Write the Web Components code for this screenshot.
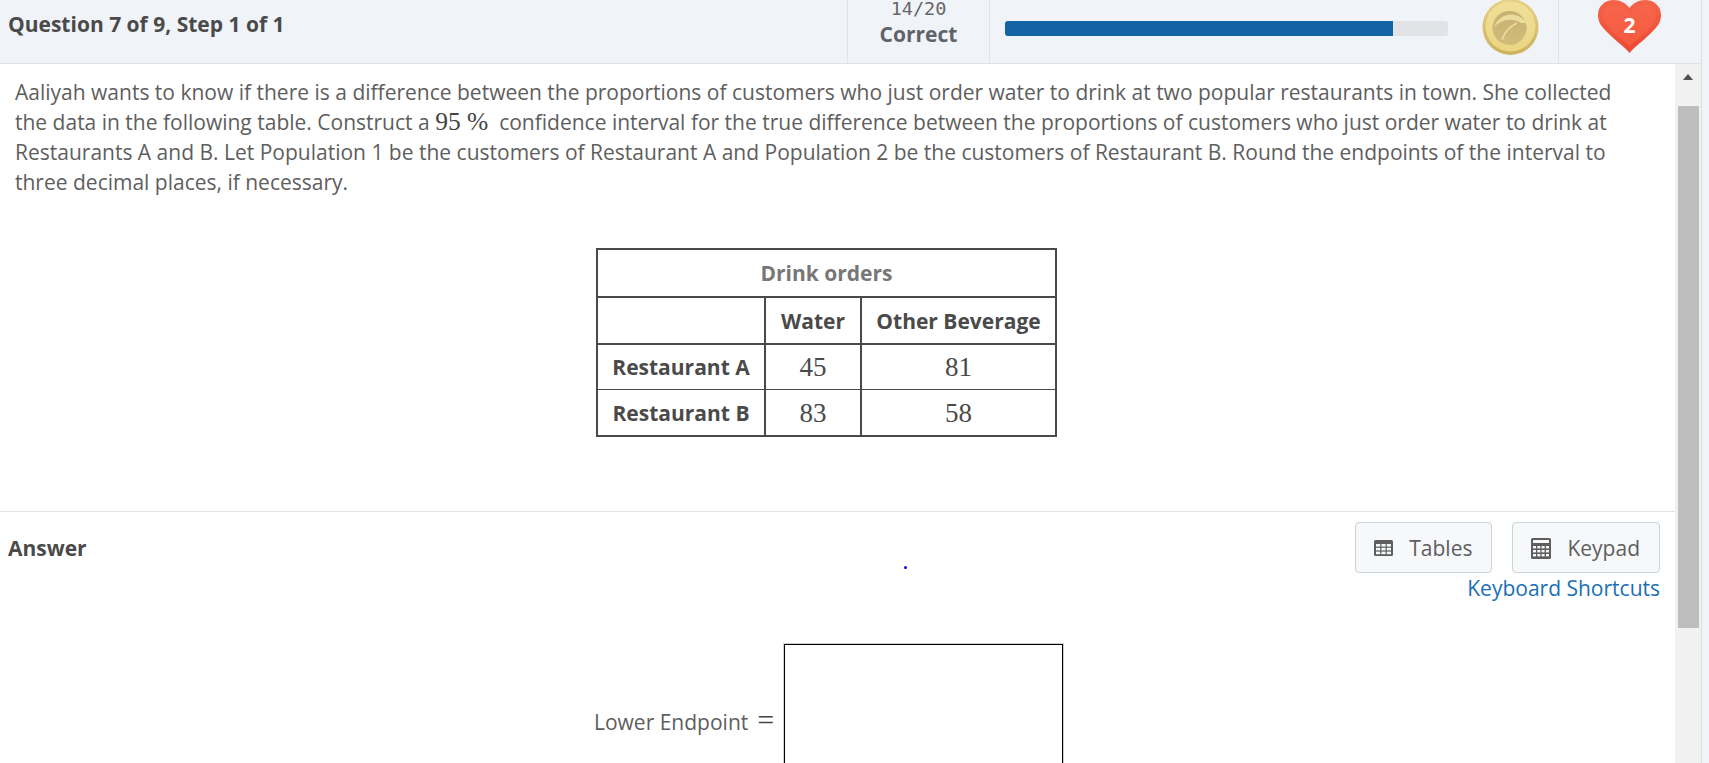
<!DOCTYPE html>
<html>
<head>
<meta charset="utf-8">
<style>
  html, body { margin: 0; height: 100%; overflow: hidden; }
  body { font-family: "Open Sans", sans-serif; color: #5e5e5e; background: #f0f3f7; }
</style>
</head>
<body>
<quiz-page>
  <quiz-header></quiz-header>
  <quiz-scroll>
    <quiz-question>
      Aaliyah wants to know if there is a difference between the proportions of customers who just order water to drink at two popular restaurants in town. She collected the data in the following table. Construct a <span style="font-family:'Liberation Serif',serif;font-size:25.5px;line-height:1;color:#444">95 %</span>&nbsp; confidence interval for the true difference between the proportions of customers who just order water to drink at Restaurants A and B. Let Population 1 be the customers of Restaurant A and Population 2 be the customers of Restaurant B. Round the endpoints of the interval to three decimal places, if necessary.
    </quiz-question>
    <drink-table></drink-table>
    <answer-bar></answer-bar>
    <answer-field label="Lower Endpoint"></answer-field>
  </quiz-scroll>
</quiz-page>

<script>
class QuizPage extends HTMLElement {
  constructor() {
    super();
    this.attachShadow({ mode: "open" });
    this.shadowRoot.innerHTML = `
      <style>
        :host { display: flex; flex-direction: column; width: 1701px; height: 763px; background: #f0f3f7; overflow: hidden; border-right: 1px solid #dcdfe3; }
      </style>
      <slot></slot>
    `;
  }
}

class QuizHeader extends HTMLElement {
  constructor() {
    super();
    this.attachShadow({ mode: "open" });
    this.shadowRoot.innerHTML = `
      <style>
        :host { display: flex; flex: none; height: 63px; background: #f0f3f7; border-bottom: 1px solid #dfe2e6; align-items: stretch; }
        .title { flex: none; width: 847px; padding: 11px 0 0 8px; font-size: 21px; font-weight: 700; color: #4a4a4a; line-height: 27px; box-sizing: border-box; }
        .score { flex: none; width: 141px; border-left: 1px solid #dfe2e6; border-right: 1px solid #dfe2e6; text-align: center; }
        .frac { font-family: "DejaVu Sans Mono", monospace; font-size: 18.5px; color: #666; line-height: 18px; }
        .ok { font-size: 21px; font-weight: 700; color: #5f6368; line-height: 26px; margin-top: 3px; }
        .bar-wrap { flex: none; width: 568px; padding-left: 15px; box-sizing: border-box; display: flex; }
        .bar { flex: none; width: 443px; height: 15px; margin-top: 21px; background: #e1e3e7; border-radius: 3px; overflow: hidden; }
        .fill { width: 388px; height: 100%; background: #1364a3; }
        .coin { flex: none; margin: 0 0 0 34px; width: 58px; height: 56px; }
        .lives { position: relative; flex: 1; border-left: 1px solid #dfe2e6; }
        .lives svg { position: absolute; left: 39px; top: 0; }
        .lives span { position: absolute; left: 39px; width: 63px; top: 11px; text-align: center; color: #fff; font-weight: 700; font-size: 21px; line-height: 28px; }
      </style>
      <div class="title">Question 7 of 9, Step 1 of 1</div>
      <div class="score"><div class="frac">14/20</div><div class="ok">Correct</div></div>
      <div class="bar-wrap">
        <div class="bar"><div class="fill"></div></div>
        <svg class="coin" viewBox="0 0 58 56">
          <defs>
            <linearGradient id="g" x1="0" y1="0" x2="0" y2="1"><stop offset="0" stop-color="#e6d184"/><stop offset="1" stop-color="#cdb25c"/></linearGradient>
            <linearGradient id="gi" x1="0" y1="0" x2="0" y2="1"><stop offset="0" stop-color="#f1df98"/><stop offset="1" stop-color="#ead684"/></linearGradient>
            <linearGradient id="gd" x1="0" y1="0" x2="0" y2="1"><stop offset="0" stop-color="#c6b176"/><stop offset="1" stop-color="#d2bc78"/></linearGradient>
          </defs>
          <circle cx="28.5" cy="27" r="28" fill="url(#g)"/>
          <circle cx="28.5" cy="26.5" r="25" fill="url(#gi)"/>
          <circle cx="27.5" cy="28" r="17" fill="url(#gd)"/>
          <path d="M12 27 C15 19 24 13 33 15 C38 16 42 19 45 23 L39 23 C33 19 25 19 19 22 C16 23 14 25 12 27 Z" fill="#ecdc9b"/>
          <path d="M20 40 C22 33 27 27 35 23" fill="none" stroke="#ecdc9b" stroke-width="1.6"/>
        </svg>
      </div>
      <div class="lives">
        <svg width="63" height="54" viewBox="0 0 63 54">
          <defs><linearGradient id="h" x1="0" y1="0" x2="0" y2="1"><stop offset="0" stop-color="#f5644a"/><stop offset="1" stop-color="#ef4632"/></linearGradient></defs>
          <path d="M31.5 53 C27 47 19 42 11 34 C4 27 0 23 0 15 C0 6 7 0 16 0 C22 0 28 3 31.5 8 C35 3 41 0 47 0 C56 0 63 6 63 15 C63 23 59 27 52 34 C44 42 36 47 31.5 53 Z" fill="url(#h)"/>
          <path d="M31.5 46 C25 40 8 30 5 17 C4 9 10 4 17 4 C23 4 28 8 31.5 13 C35 8 40 4 46 4 C53 4 59 9 58 17 C55 30 38 40 31.5 46 Z" fill="#f96a4c" opacity=".5"/>
        </svg>
        <span>2</span>
      </div>
    `;
  }
}

class QuizScroll extends HTMLElement {
  constructor() {
    super();
    this.attachShadow({ mode: "open" });
    this.shadowRoot.innerHTML = `
      <style>
        :host { display: flex; flex: 1; min-height: 0; }
        .content { width: 1675px; background: #fff; overflow: hidden; flex: none; }
        .rail { flex: 1; background: #f1f1f1; display: flex; flex-direction: column; align-items: center; }
        .arrow { flex: none; width: 0; height: 0; border-left: 5.5px solid transparent; border-right: 5.5px solid transparent; border-bottom: 6px solid #505050; margin-top: 10px; }
        .thumb { flex: none; width: 21px; height: 522px; background: #bebebe; margin-top: 26px; }
      </style>
      <div class="content"><slot></slot></div>
      <div class="rail"><div class="arrow"></div><div class="thumb"></div></div>
    `;
  }
}

class QuizQuestion extends HTMLElement {
  constructor() {
    super();
    this.attachShadow({ mode: "open" });
    this.shadowRoot.innerHTML = `
      <style>
        :host { display: block; padding: 13px 50px 0 15px; font-size: 21px; line-height: 30px; color: #5e5e5e; }
      </style>
      <slot></slot>
    `;
  }
}

class DrinkTable extends HTMLElement {
  constructor() {
    super();
    this.attachShadow({ mode: "open" });
    this.shadowRoot.innerHTML = `
      <style>
        :host { display: flex; justify-content: flex-start; padding: 51px 0 0 596px; }
        table { border-collapse: collapse; table-layout: fixed; border: 2px solid #4a4a4a; font-size: 21px; color: #4a4a4a; width: 461px; }
        td { border: 1px solid #4a4a4a; text-align: center; padding: 0; line-height: 24px; font-weight: 700; }
        .cap { color: #777; height: 46px; border-bottom-width: 2px; }
        .hd td { height: 45px; border-bottom-width: 2px; }
        .a td { height: 44px; }
        .b td { height: 45px; }
        .lab { border-right-width: 2px; }
        .wat { border-right-width: 2px; }
        .num { font-family: "Liberation Serif", serif; font-weight: 400; font-size: 27px; }
      </style>
      <table>
        <colgroup><col style="width:168px"><col style="width:96px"><col></colgroup>
        <tr><td class="cap" colspan="3">Drink orders</td></tr>
        <tr class="hd"><td class="lab"></td><td class="wat">Water</td><td>Other Beverage</td></tr>
        <tr class="a"><td class="lab">Restaurant A</td><td class="wat num">45</td><td class="num">81</td></tr>
        <tr class="b"><td class="lab">Restaurant B</td><td class="wat num">83</td><td class="num">58</td></tr>
      </table>
    `;
  }
}

class AnswerBar extends HTMLElement {
  constructor() {
    super();
    this.attachShadow({ mode: "open" });
    this.shadowRoot.innerHTML = `
      <style>
        :host { display: flex; position: relative; margin-top: 74px; border-top: 1px solid #dfe2e6; padding: 10px 15px 0 8px; justify-content: space-between; }
        .label { font-size: 21px; font-weight: 700; color: #4a4a4a; line-height: 28px; padding-top: 12px; }
        .tools { display: flex; flex-direction: column; align-items: flex-end; }
        .btns { display: flex; gap: 20px; }
        button { font: inherit; font-size: 21px; color: #5e5e5e; background: #f6f8fa; border: 1px solid #c8d3da; border-radius: 4px; height: 51px; padding: 1px 19px 0 18px; display: flex; align-items: center; gap: 16px; }
        .link { color: #1a6fb5; font-size: 21px; line-height: 28px; margin-top: 1px; }
        .dot { position: absolute; left: 904px; top: 54px; width: 3px; height: 3px; border-radius: 50%; background: #0000ee; }
      </style>
      <div class="label">Answer</div>
      <span class="dot"></span>
      <div class="tools">
        <div class="btns">
          <button>
            <svg width="19" height="16" viewBox="0 0 19 16"><rect x="0" y="0" width="19" height="16" rx="1.5" fill="#5e5e5e"/><g fill="#f6f8fa"><rect x="2" y="4" width="4.2" height="2.6"/><rect x="7.4" y="4" width="4.2" height="2.6"/><rect x="12.8" y="4" width="4.2" height="2.6"/><rect x="2" y="7.8" width="4.2" height="2.6"/><rect x="7.4" y="7.8" width="4.2" height="2.6"/><rect x="12.8" y="7.8" width="4.2" height="2.6"/><rect x="2" y="11.6" width="4.2" height="2.6"/><rect x="7.4" y="11.6" width="4.2" height="2.6"/><rect x="12.8" y="11.6" width="4.2" height="2.6"/></g></svg>
            Tables
          </button>
          <button>
            <svg width="20" height="21" viewBox="0 0 20 21"><rect x="0" y="0" width="20" height="21" rx="1.5" fill="#5e5e5e"/><rect x="2" y="2" width="16" height="3" fill="#f6f8fa"/><g fill="#f6f8fa"><rect x="2" y="8" width="3" height="2.4"/><rect x="6.3" y="8" width="3" height="2.4"/><rect x="10.6" y="8" width="3" height="2.4"/><rect x="15" y="8" width="3" height="2.4"/><rect x="2" y="12" width="3" height="2.4"/><rect x="6.3" y="12" width="3" height="2.4"/><rect x="10.6" y="12" width="3" height="2.4"/><rect x="15" y="12" width="3" height="2.4"/><rect x="2" y="16" width="3" height="2.4"/><rect x="6.3" y="16" width="3" height="2.4"/><rect x="10.6" y="16" width="3" height="2.4"/><rect x="15" y="16" width="3" height="2.4"/></g></svg>
            Keypad
          </button>
        </div>
        <div class="link">Keyboard Shortcuts</div>
      </div>
    `;
  }
}

class AnswerField extends HTMLElement {
  constructor() {
    super();
    this.attachShadow({ mode: "open" });
    const label = this.getAttribute("label");
    this.shadowRoot.innerHTML = `
      <style>
        :host { display: flex; align-items: flex-start; margin-top: 42px; padding-left: 594px; font-size: 21px; color: #5e5e5e; }
        .lab { margin-top: 61px; line-height: 30px; white-space: nowrap; }
        .eq { font-family: "Liberation Serif", serif; font-size: 30px; color: #444; margin: 0 10px 0 9px; line-height: 1; }
        .box { width: 279px; height: 200px; border: 1px solid #000; outline: 1px solid #d0d0d0; box-sizing: border-box; flex: none; }
      </style>
      <div class="lab">${label}<span class="eq">=</span></div>
      <div class="box"></div>
    `;
  }
}

customElements.define("quiz-page", QuizPage);
customElements.define("quiz-header", QuizHeader);
customElements.define("quiz-scroll", QuizScroll);
customElements.define("quiz-question", QuizQuestion);
customElements.define("drink-table", DrinkTable);
customElements.define("answer-bar", AnswerBar);
customElements.define("answer-field", AnswerField);
</script>
</body>
</html>
